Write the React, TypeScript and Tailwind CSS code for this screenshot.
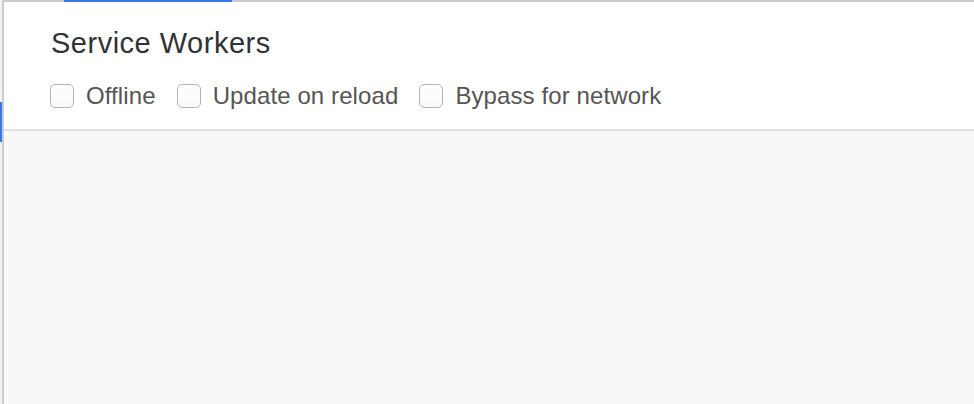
import React from "react";

function Check({ label }: { label: string }) {
  return (
    <label className="flex items-center">
      <span className="w-[24px] h-[24px] rounded-[5px] border border-[#b4b4b4] bg-gradient-to-b from-white to-[#f8f8f8]" />
      <span className="ml-[12px] text-[24px] leading-[24px] tracking-[0.1px] text-[#555555]">{label}</span>
    </label>
  );
}

export default function App() {
  return (
    <div
      className="w-[974px] h-[404px] flex bg-white overflow-hidden"
      style={{ fontFamily: '"Liberation Sans", Arial, sans-serif' }}
    >
      <div className="w-[2px] flex flex-col bg-[#f3f3f3]">
        <div className="h-[102px]" />
        <div className="h-[40px] bg-[#3b78e7]" />
        <div className="h-[60px]" />
        <div className="h-[1px] bg-[#dddddd]" />
      </div>
      <div className="w-[2px] bg-[#cccccc]" />
      <div className="flex-1 flex flex-col">
        <div className="h-[2px] flex bg-[#cccccc]">
          <div className="ml-[60px] w-[168px] bg-[#3b78e7]" />
        </div>
        <div className="bg-white pl-[46px] pt-[24px] pb-[21px]">
          <div className="ml-[1px] text-[29px] leading-[34px] tracking-[0.5px] text-[#303336]">Service Workers</div>
          <div className="mt-[24px] flex items-center gap-[21px]">
            <Check label="Offline" />
            <Check label="Update on reload" />
            <Check label="Bypass for network" />
          </div>
        </div>
        <div className="h-[2px] bg-[#e2e2e2]" />
        <div className="flex-1 bg-[#f8f8f8]" />
      </div>
    </div>
  );
}
